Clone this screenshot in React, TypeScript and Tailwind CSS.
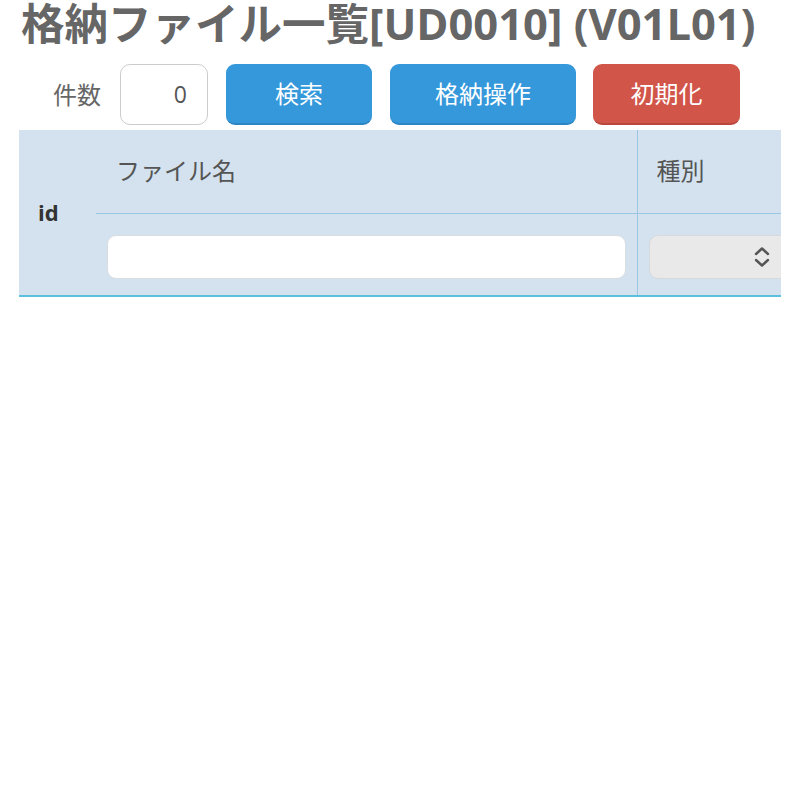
import React from "react";

const font = { fontFamily: '"Open Sans", "Noto Sans CJK JP", sans-serif' };

export default function App() {
  return (
    <div className="w-[800px] h-[797px] bg-white overflow-hidden" style={font}>
      <h1 className="pl-[21px] pt-0 text-[43.5px] leading-[48px] font-bold text-[#666666] whitespace-nowrap">
        格納ファイル一覧[UD0010] (V01L01)
      </h1>
      <div className="flex items-center mt-[16px] h-[61px]">
        <span className="ml-[53px] text-[24px] text-[#666666]">件数</span>
        <div className="ml-[19px] w-[88px] h-[61px] border border-[#cccccc] rounded-[10px] flex items-center justify-end pr-[20px] text-[23px] text-[#555555]">
          0
        </div>
        <button className="ml-[18px] w-[146px] h-[61px] rounded-[9px] bg-[#3498db] border-b-2 border-[#2d86c4] text-white text-[24px] flex items-center justify-center">
          検索
        </button>
        <button className="ml-[18px] w-[186px] h-[61px] rounded-[9px] bg-[#3498db] border-b-2 border-[#2d86c4] text-white text-[24px] flex items-center justify-center">
          格納操作
        </button>
        <button className="ml-[17px] w-[147px] h-[61px] rounded-[9px] bg-[#d2554a] border-b-2 border-[#ba473d] text-white text-[24px] flex items-center justify-center">
          初期化
        </button>
      </div>
      <div className="mx-[19px] mt-[5px] overflow-hidden">
        <table className="border-collapse bg-[#d3e2ee] w-[800px] table-fixed">
          <colgroup>
            <col className="w-[77px]" />
            <col className="w-[541px]" />
            <col className="w-[182px]" />
          </colgroup>
          <thead>
            <tr className="h-[83px]">
              <th rowSpan={2} className="text-left pl-[19px] text-[22px] font-bold text-[#333333] border-b-2 border-[#5bc0de] align-middle">
                id
              </th>
              <th className="text-left pl-[20px] font-normal text-[24px] text-[#555555] border-b border-b-[#98c6e3] border-r border-r-[#98c6e3]">
                ファイル名
              </th>
              <th className="text-left pl-[19px] font-normal text-[24px] text-[#555555] border-b border-b-[#98c6e3]">
                種別
              </th>
            </tr>
            <tr className="h-[83px]">
              <th className="pl-[11px] pr-[11px] pt-[5px] border-b-2 border-b-[#5bc0de] border-r border-r-[#98c6e3]">
                <div className="h-[44px] bg-white border border-[#d8dde2] rounded-[9px]" />
              </th>
              <th className="pl-[11px] pt-[5px] border-b-2 border-b-[#5bc0de]">
                <div className="h-[44px] w-[160px] bg-[#e9e9e9] border border-[#d5d9dc] rounded-[9px] flex items-center justify-start pl-[103px]">
                  <svg width="18" height="22" viewBox="0 0 18 22" fill="none" stroke="#555555" strokeWidth="2.4" strokeLinecap="round" strokeLinejoin="round">
                    <path d="M3 8 L9 2.5 L15 8" />
                    <path d="M3 14 L9 19.5 L15 14" />
                  </svg>
                </div>
              </th>
            </tr>
          </thead>
        </table>
      </div>
    </div>
  );
}
